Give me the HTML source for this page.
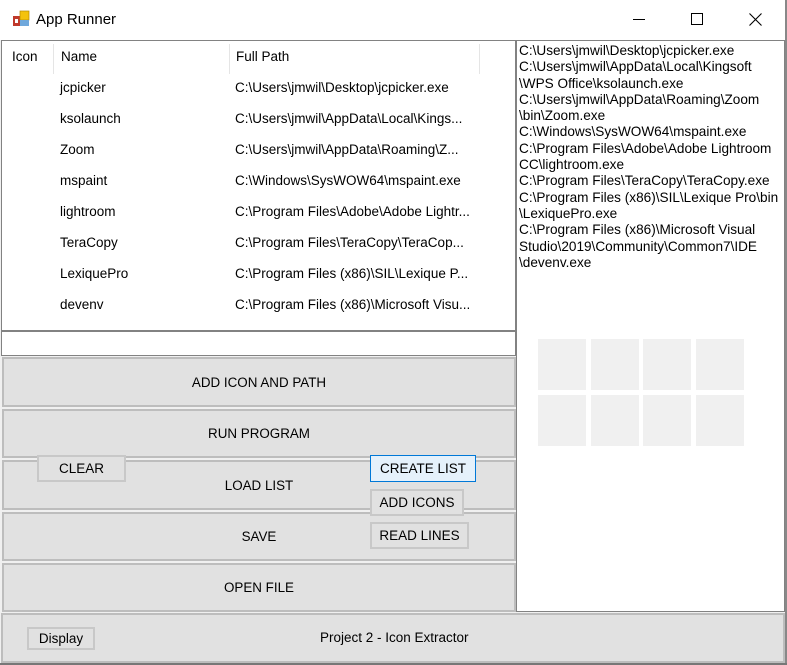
<!DOCTYPE html>
<html><head><meta charset="utf-8"><style>
*{margin:0;padding:0;box-sizing:border-box}
body{width:787px;height:665px;overflow:hidden;background:#f0f0f0;font-family:"Liberation Sans",sans-serif;font-size:13.5px;color:#000;position:relative}
.a{position:absolute}
.btn{position:absolute;background:#e1e1e1;border:1px solid #adadad;display:flex;align-items:center;justify-content:center;font-size:13.5px;white-space:nowrap}
.big{left:2px;width:514px;border:2px solid #bdbdbd;background:#e1e1e1;font-size:13.4px}
.sm{border:2px solid #c8c8c8;background:#e1e1e1}
.row{position:absolute;left:0;width:100%;height:20px}
.tile{position:absolute;width:48px;height:51px;background:#f0f0f0}
</style></head><body>
<div class="a" style="left:0;top:0;width:787px;height:40px;background:#fff"></div>
<svg class="a" style="left:12px;top:10px" width="18" height="18" viewBox="0 0 18 18">
<rect x="1" y="6" width="8" height="10" fill="#c0392b"/><rect x="3" y="9" width="3" height="4" fill="#fff"/>
<rect x="8" y="1" width="9" height="9" fill="#f4c20d" stroke="#b58900" stroke-width=".7"/>
<rect x="8" y="10" width="9" height="6" fill="#6fa8dc"/></svg>
<div class="a" style="left:36px;top:11px;font-size:15px">App Runner</div>
<div class="a" style="left:633px;top:19px;width:12px;height:1px;background:#000"></div>
<div class="a" style="left:691px;top:13px;width:12px;height:12px;border:1px solid #000"></div>
<svg class="a" style="left:749px;top:13px" width="13" height="13"><path d="M0.5 0.5L12.5 12.5M12.5 0.5L0.5 12.5" stroke="#000" stroke-width="1.1"/></svg>
<div class="a" style="left:785px;top:0;width:2px;height:665px;background:#888"></div>
<div class="a" style="left:1px;top:40px;width:515px;height:292px;background:#fff;border:1px solid #828282;border-bottom:2px solid #828282">
 <div class="a" style="left:10px;top:8px">Icon</div>
 <div class="a" style="left:51px;top:3px;width:1px;height:30px;background:#e5e5e5"></div>
 <div class="a" style="left:59px;top:8px">Name</div>
 <div class="a" style="left:227px;top:3px;width:1px;height:30px;background:#e5e5e5"></div>
 <div class="a" style="left:234px;top:8px">Full Path</div>
 <div class="a" style="left:477px;top:3px;width:1px;height:30px;background:#e5e5e5"></div>
 <div class="row" style="top:39px"><span class="a" style="left:58px">jcpicker</span><span class="a" style="left:233px">C:\Users\jmwil\Desktop\jcpicker.exe</span></div>
 <div class="row" style="top:70px"><span class="a" style="left:58px">ksolaunch</span><span class="a" style="left:233px">C:\Users\jmwil\AppData\Local\Kings...</span></div>
 <div class="row" style="top:101px"><span class="a" style="left:58px">Zoom</span><span class="a" style="left:233px">C:\Users\jmwil\AppData\Roaming\Z...</span></div>
 <div class="row" style="top:132px"><span class="a" style="left:58px">mspaint</span><span class="a" style="left:233px">C:\Windows\SysWOW64\mspaint.exe</span></div>
 <div class="row" style="top:163px"><span class="a" style="left:58px">lightroom</span><span class="a" style="left:233px">C:\Program Files\Adobe\Adobe Lightr...</span></div>
 <div class="row" style="top:194px"><span class="a" style="left:58px">TeraCopy</span><span class="a" style="left:233px">C:\Program Files\TeraCopy\TeraCop...</span></div>
 <div class="row" style="top:225px"><span class="a" style="left:58px">LexiquePro</span><span class="a" style="left:233px">C:\Program Files (x86)\SIL\Lexique P...</span></div>
 <div class="row" style="top:256px"><span class="a" style="left:58px">devenv</span><span class="a" style="left:233px">C:\Program Files (x86)\Microsoft Visu...</span></div>
</div>
<div class="a" style="left:1px;top:332px;width:515px;height:24px;background:#fff;border:1px solid #828282;border-top:none"></div>
<div class="btn big" style="top:357px;height:50px">ADD ICON AND PATH</div>
<div class="btn big" style="top:409px;height:49px">RUN PROGRAM</div>
<div class="btn big" style="top:460px;height:50px">LOAD LIST</div>
<div class="btn big" style="top:512px;height:49px">SAVE</div>
<div class="btn big" style="top:563px;height:49px">OPEN FILE</div>
<div class="btn sm" style="left:37px;top:455px;width:89px;height:27px">CLEAR</div>
<div class="btn" style="left:370px;top:455px;width:106px;height:27px;background:#e5f1fb;border:1px solid #0078d7">CREATE LIST</div>
<div class="btn sm" style="left:370px;top:489px;width:94px;height:27px">ADD ICONS</div>
<div class="btn sm" style="left:370px;top:522px;width:99px;height:27px">READ LINES</div>
<div class="a" style="left:516px;top:40px;width:269px;height:572px;background:#fff;border:1px solid #828282;padding:2px 0 0 2px;font-size:13.6px;line-height:16.3px;white-space:nowrap">
C:\Users\jmwil\Desktop\jcpicker.exe<br>C:\Users\jmwil\AppData\Local\Kingsoft<br>\WPS Office\ksolaunch.exe<br>C:\Users\jmwil\AppData\Roaming\Zoom<br>\bin\Zoom.exe<br>C:\Windows\SysWOW64\mspaint.exe<br>C:\Program Files\Adobe\Adobe Lightroom<br>CC\lightroom.exe<br>C:\Program Files\TeraCopy\TeraCopy.exe<br>C:\Program Files (x86)\SIL\Lexique Pro\bin<br>\LexiquePro.exe<br>C:\Program Files (x86)\Microsoft Visual<br>Studio\2019\Community\Common7\IDE<br>\devenv.exe
</div>
<div class="tile" style="left:538px;top:339px"></div><div class="tile" style="left:591px;top:339px"></div><div class="tile" style="left:643px;top:339px"></div><div class="tile" style="left:696px;top:339px"></div>
<div class="tile" style="left:538px;top:395px"></div><div class="tile" style="left:591px;top:395px"></div><div class="tile" style="left:643px;top:395px"></div><div class="tile" style="left:696px;top:395px"></div>
<div class="a" style="left:1px;top:613px;width:784px;height:50px;background:#e1e1e1;border:2px solid #bdbdbd"></div>
<div class="btn sm" style="left:27px;top:627px;width:68px;height:23px">Display</div>
<div class="a" style="left:320px;top:630px">Project 2 - Icon Extractor</div>
<div class="a" style="left:0;top:663px;width:787px;height:2px;background:#777"></div>
</body></html>
